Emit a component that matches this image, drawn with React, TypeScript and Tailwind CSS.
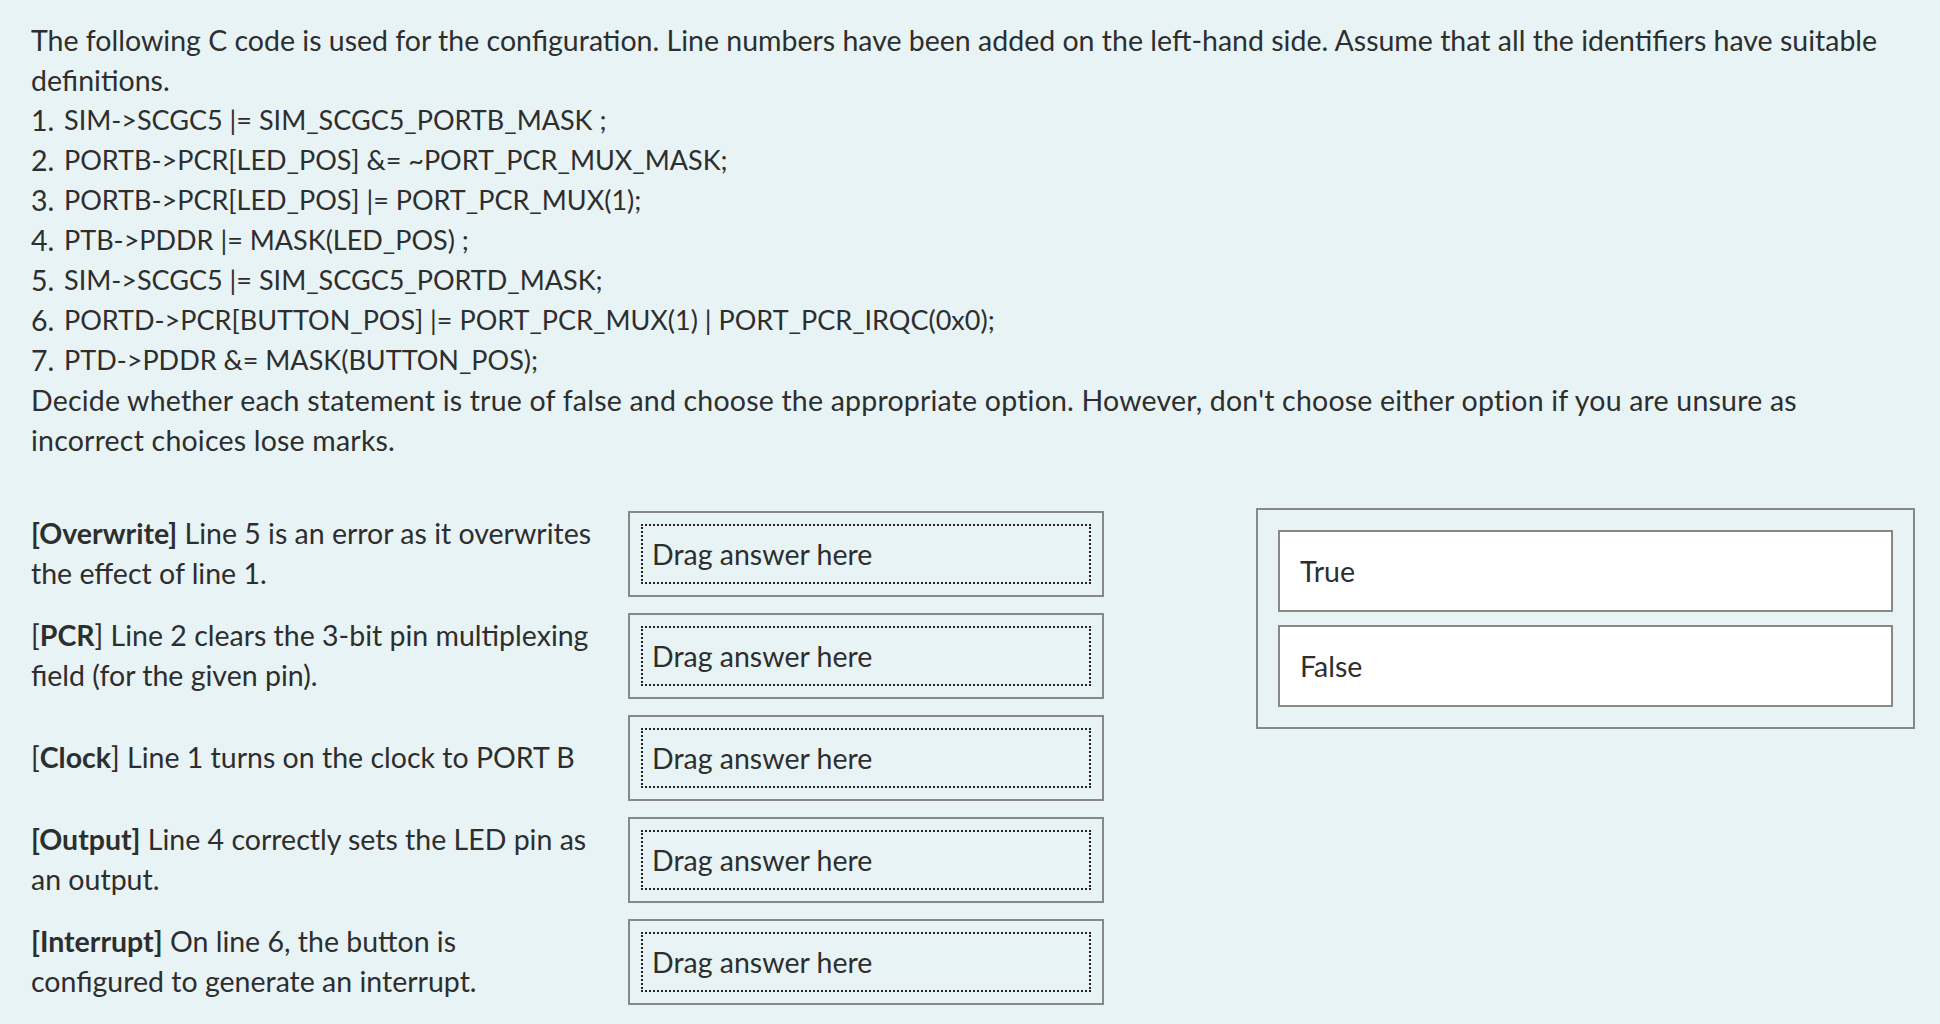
const codeLines = [
  'SIM->SCGC5 |= SIM_SCGC5_PORTB_MASK ;',
  'PORTB->PCR[LED_POS] &= ~PORT_PCR_MUX_MASK;',
  'PORTB->PCR[LED_POS] |= PORT_PCR_MUX(1);',
  'PTB->PDDR |= MASK(LED_POS) ;',
  'SIM->SCGC5 |= SIM_SCGC5_PORTD_MASK;',
  'PORTD->PCR[BUTTON_POS] |= PORT_PCR_MUX(1) | PORT_PCR_IRQC(0x0);',
  'PTD->PDDR &= MASK(BUTTON_POS);',
]

const statements = [
  <><b>[Overwrite]</b> Line 5 is an error as it overwrites<br />the effect of line 1.</>,
  <>[<b>PCR</b>] Line 2 clears the 3-bit pin multiplexing<br />field (for the given pin).</>,
  <>[<b>Clock</b>] Line 1 turns on the clock to PORT B</>,
  <><b>[Output]</b> Line 4 correctly sets the LED pin as<br />an output.</>,
  <><b>[Interrupt]</b> On line 6, the button is<br />configured to generate an interrupt.</>,
]

const DropBox = () => (
  <div className="w-[476px] h-[86px] border-2 border-[#888] p-[11px]">
    <div className="h-full border-2 border-dotted border-[#222] flex items-center pl-[9px]">
      Drag answer here
    </div>
  </div>
)

const Choice = ({ label }: { label: string }) => (
  <div className="h-[82px] bg-white border-2 border-[#888] flex items-center pl-[20px]">{label}</div>
)

export default function App() {
  return (
    <div className="min-h-screen bg-[#e7f3f5] pl-[31px] pr-[25px] pt-[20px] pb-4 text-[28.5px] leading-[40px] text-[#2e2e2e] font-['Lato',sans-serif] whitespace-nowrap">
      <div>
        The following C code is used for the configuration. Line numbers have been added on the left-hand side. Assume that all the identifiers have suitable
        <br />
        definitions.
      </div>
      {codeLines.map((line, i) => (
        <div key={i} className="flex">
          <span className="w-[33px]">{i + 1}.</span>
          <span className="text-[27px]">{line}</span>
        </div>
      ))}
      <div className="tracking-[0.2px]">
        Decide whether each statement is true of false and choose the appropriate option. However, don't choose either option if you are unsure as
        <br />
        incorrect choices lose marks.
      </div>

      <div className="mt-[48px] flex justify-between items-start">
        <div className="pt-[3px] flex flex-col gap-[16px]">
          {statements.map((s, i) => (
            <div key={i} className="flex items-center">
              <div className="w-[597px] pb-[3px]">{s}</div>
              <DropBox />
            </div>
          ))}
        </div>
        <div className="w-[659px] border-2 border-[#888] p-[20px] flex flex-col gap-[13px]">
          <Choice label="True" />
          <Choice label="False" />
        </div>
      </div>
    </div>
  )
}
